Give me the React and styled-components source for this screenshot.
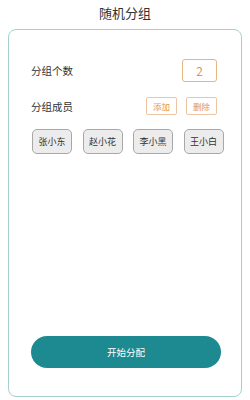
import React from "react";
import styled, { createGlobalStyle } from "styled-components";

const Global = createGlobalStyle`
  html, body { margin: 0; padding: 0; background: #fff; }
  body { font-family: "Noto Sans CJK SC", "Noto Sans", sans-serif; }
`;

const Page = styled.div`
  width: 250px;
  height: 400px;
  display: flex;
  flex-direction: column;
  box-sizing: border-box;
  padding: 0 8px 3px 8px;
`;

const Title = styled.h1`
  margin: 0;
  height: 29px;
  line-height: 26px;
  font-size: 13px;
  font-weight: 400;
  color: #333;
  text-align: center;
`;

const Card = styled.div`
  flex: 1;
  border: 1px solid #a4d0d2;
  border-radius: 8px;
  display: flex;
  flex-direction: column;
  padding: 29px 24px 28px 22px;
`;

const Row = styled.div`
  display: flex;
  align-items: center;
  justify-content: space-between;
  height: ${(p) => p.h}px;
  margin-bottom: ${(p) => p.mb}px;
`;

const Label = styled.span`
  font-size: 10.5px;
  color: #333;
`;

const NumBox = styled.div`
  width: 35px;
  height: 23px;
  box-sizing: border-box;
  border: 1px solid #eab585;
  border-radius: 3px;
  color: #e3944f;
  font-size: 12px;
  display: flex;
  align-items: center;
  justify-content: center;
`;

const Actions = styled.div`
  display: flex;
  gap: 9px;
`;

const SmallBtn = styled.button`
  width: 31px;
  height: 18px;
  padding: 0;
  box-sizing: border-box;
  border: 1px solid #edc5a2;
  border-radius: 2px;
  background: #fff;
  color: #e3944f;
  font-family: inherit;
  font-size: 8.5px;
  display: flex;
  align-items: center;
  justify-content: center;
`;

const Chips = styled.div`
  display: flex;
  gap: 10.5px;
  margin-left: 1px;
  margin-right: -8px;
`;

const Chip = styled.div`
  flex: 0 0 40px;
  width: 40px;
  height: 25px;
  box-sizing: border-box;
  border: 1px solid #a8a8a8;
  border-radius: 5px;
  background: #ececec;
  color: #333;
  font-size: 9px;
  display: flex;
  align-items: center;
  justify-content: center;
`;

const Spacer = styled.div`
  flex: 1;
`;

const StartBtn = styled.button`
  width: 190px;
  height: 32px;
  border: none;
  border-radius: 16px;
  background: #1c8a90;
  color: #fff;
  font-family: inherit;
  font-size: 9.5px;
`;

export default function App() {
  const members = ["张小东", "赵小花", "李小黑", "王小白"];
  return (
    <>
      <Global />
      <Page>
        <Title>随机分组</Title>
        <Card>
          <Row h={23} mb={15}>
            <Label>分组个数</Label>
            <NumBox>2</NumBox>
          </Row>
          <Row h={18} mb={14}>
            <Label>分组成员</Label>
            <Actions>
              <SmallBtn>添加</SmallBtn>
              <SmallBtn>删除</SmallBtn>
            </Actions>
          </Row>
          <Chips>
            {members.map((m) => (
              <Chip key={m}>{m}</Chip>
            ))}
          </Chips>
          <Spacer />
          <StartBtn>开始分配</StartBtn>
        </Card>
      </Page>
    </>
  );
}
